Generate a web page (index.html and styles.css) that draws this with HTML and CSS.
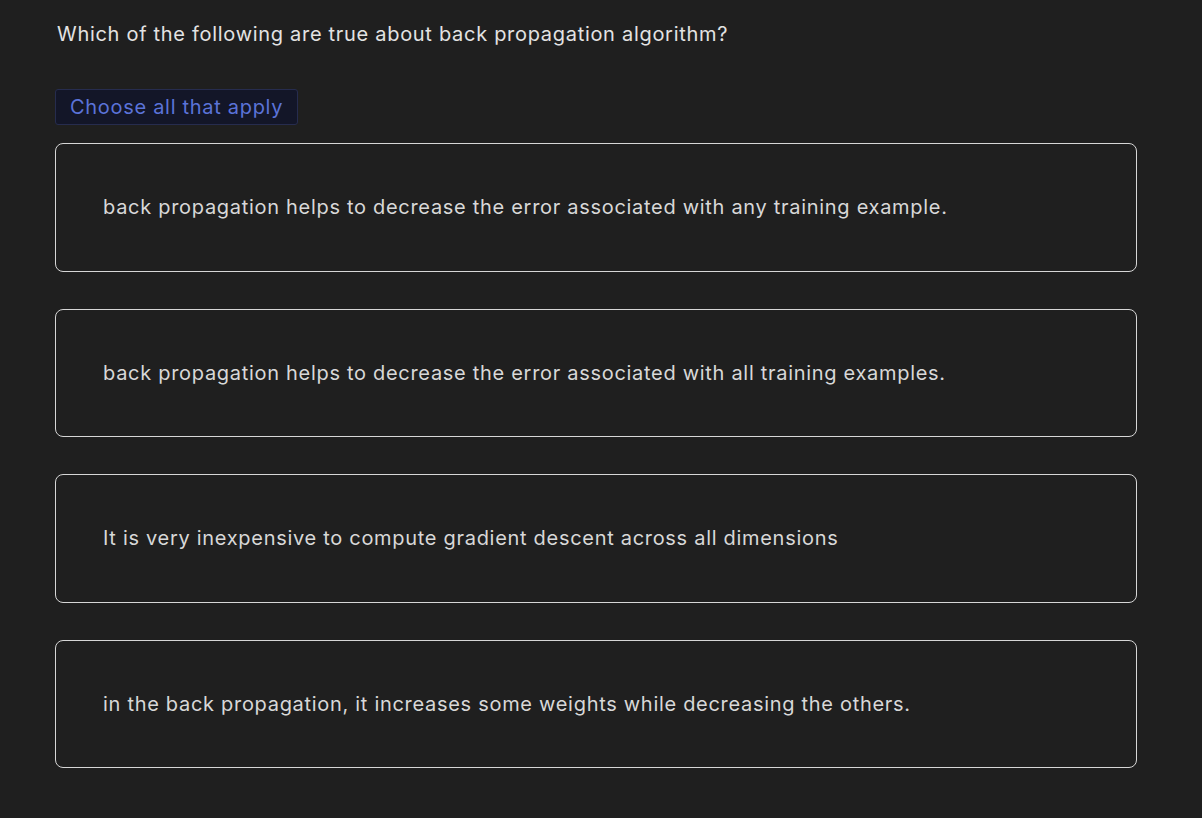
FILE: index.html
```html
<!DOCTYPE html>
<html lang="en">
<head>
<meta charset="utf-8">
<link rel="stylesheet" href="styles.css">
</head>
<body>
<main class="quiz">
  <p class="question">Which of the following are true about back propagation algorithm?</p>
  <div class="hint">Choose all that apply</div>
  <ul class="options">
    <li class="option">back propagation helps to decrease the error associated with any training example.</li>
    <li class="option">back propagation helps to decrease the error associated with all training examples.</li>
    <li class="option">It is very inexpensive to compute gradient descent across all dimensions</li>
    <li class="option">in the back propagation, it increases some weights while decreasing the others.</li>
  </ul>
</main>
</body>
</html>
```

FILE: styles.css
```css
html, body {
  margin: 0;
  padding: 0;
  background: #1f1f1f;
}
body {
  font-family: Inter, "Noto Sans", sans-serif;
  color: #e2e2e2;
  letter-spacing: 0.7px;
}
.quiz {
  padding: 20px 65px 0 55px;
  display: flex;
  flex-direction: column;
  align-items: flex-start;
}
.question {
  margin: 0 0 0 2px;
  font-size: 20px;
  line-height: 28px;
  color: #e3e3e3;
}
.hint {
  margin-top: 41px;
  box-sizing: border-box;
  height: 36px;
  padding: 0 14px;
  display: flex;
  align-items: center;
  font-size: 20px;
  color: #5b73d8;
  background: #131628;
  border: 1px solid #262c4e;
  border-radius: 3px;
}
.options {
  list-style: none;
  margin: 18px 0 0;
  padding: 0;
  width: 1082px;
  display: flex;
  flex-direction: column;
  gap: 37px;
}
.option {
  box-sizing: border-box;
  height: 128.5px;
  display: flex;
  align-items: center;
  padding: 0 47px;
  border: 1px solid #d6d6d6;
  border-radius: 8px;
  font-size: 20px;
  color: #d8d8d8;
}
```
